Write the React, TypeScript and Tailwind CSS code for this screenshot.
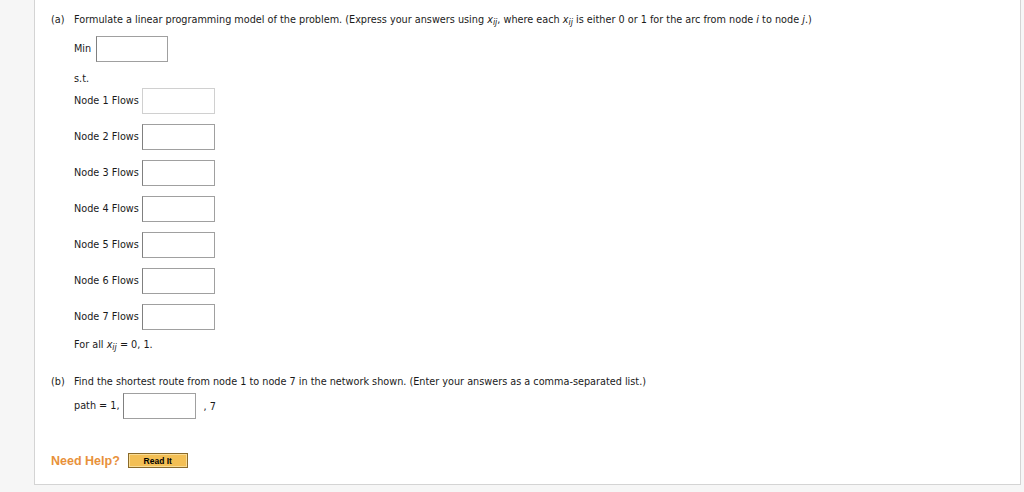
const nodes = [1, 2, 3, 4, 5, 6, 7]

function Xij() {
  return (
    <span className="italic">
      x<sub className="text-[8px] italic leading-none">ij</sub>
    </span>
  )
}

function Box({ w = 'w-[73px]', light = false }: { w?: string; light?: boolean }) {
  return (
    <input
      type="text"
      className={`h-[26px] ${w} border bg-white outline-none ${
        light ? 'border-[#d0d0d0]' : 'border-[#a0a0a0] border-l-[#808080]'
      }`}
    />
  )
}

export default function App() {
  return (
    <div className="min-h-[492px] bg-[#f6f6f6] font-['DejaVu_Sans',Verdana,sans-serif] text-[9.7px] leading-[14px] text-[#1a1a1a]">
      <div className="ml-[34px] mr-[3px] h-[485px] border-x border-b border-[#d4d4d4] bg-white pl-[16px] pt-[13px]">
        <div className="flex">
          <span className="w-[23px]">(a)</span>
          <span>
            Formulate a linear programming model of the problem. (Express your answers using <Xij />, where
            each <Xij /> is either 0 or 1 for the arc from node <i>i</i> to node <i>j</i>.)
          </span>
        </div>

        <div className="ml-[23px]">
          <div className="mt-[9px] flex items-center gap-[5px]">
            <span>Min</span>
            <Box w="w-[72px]" />
          </div>

          <div className="mt-[10px]">s.t.</div>

          <div className="mt-[2px] flex flex-col gap-[10px]">
            {nodes.map((n) => (
              <div key={n} className="flex items-center gap-[3px]">
                <span>Node {n} Flows</span>
                <Box light={n === 1} />
              </div>
            ))}
          </div>

          <div className="mt-[8px]">
            For all <Xij /> = 0, 1.
          </div>
        </div>

        <div className="mt-[23px] flex">
          <span className="w-[23px]">(b)</span>
          <span>
            Find the shortest route from node 1 to node 7 in the network shown. (Enter your answers as a
            comma-separated list.)
          </span>
        </div>

        <div className="ml-[23px] mt-[4px] flex items-center">
          <span>path = 1,</span>
          <span className="ml-[3px]">
            <Box />
          </span>
          <span className="ml-[8px] mt-[2px]">, 7</span>
        </div>

        <div className="mt-[34px] flex items-center gap-[8px]">
          <span className="font-['Liberation_Sans',Arial,sans-serif] text-[12.5px] font-bold text-[#e8913a]">
            Need Help?
          </span>
          <button className="flex h-[15px] w-[60px] items-center justify-center border border-[#8a6a2a] bg-[#f3bf55] font-['Liberation_Sans',Arial,sans-serif] text-[8.5px] font-bold text-black shadow-[inset_0_0_0_1px_#f9dc95]">
            Read It
          </button>
        </div>
      </div>
    </div>
  )
}
